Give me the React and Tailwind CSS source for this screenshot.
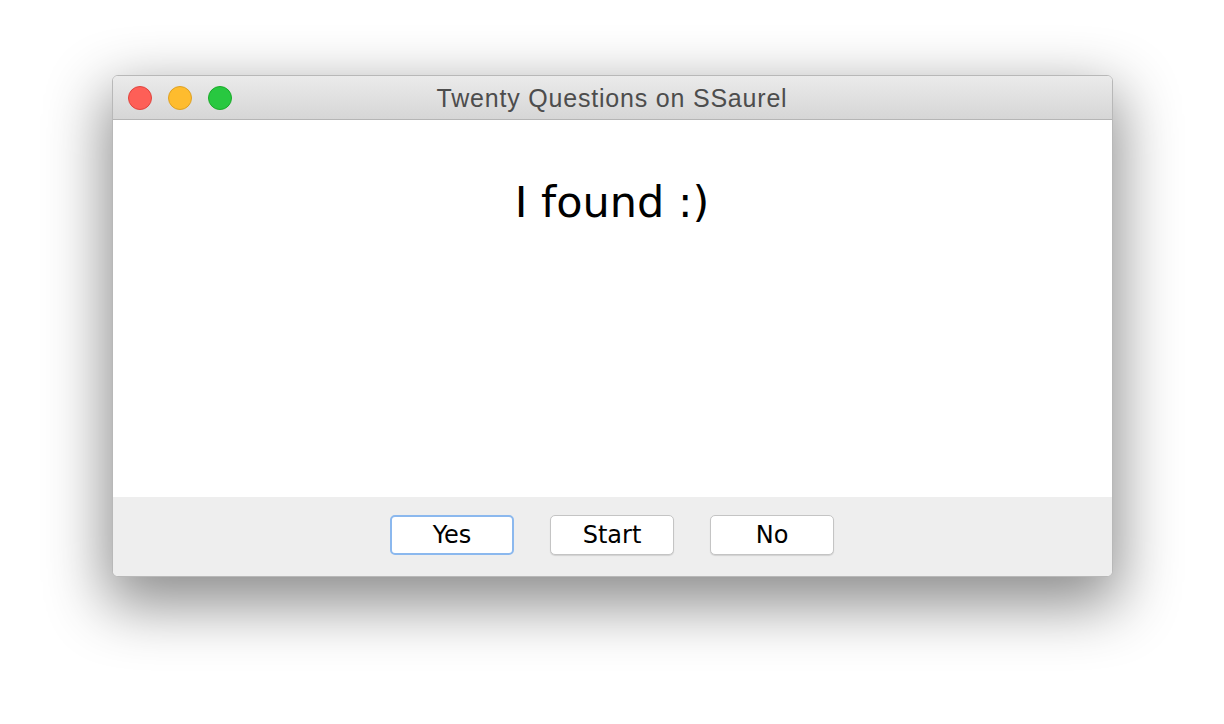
export default function App() {
  return (
    <div className="w-[1224px] h-[724px] bg-white flex flex-col items-center pt-[75px]">
      <div className="w-[1001px] h-[502px] rounded-[6px] bg-white flex flex-col overflow-hidden border border-[#b8b8b8] shadow-[0_22px_60px_6px_rgba(0,0,0,0.45)]">
        <div className="relative h-[44px] shrink-0 flex items-center justify-center bg-gradient-to-b from-[#ebebeb] to-[#d6d6d6] border-b border-[#b5b5b5]">
          <div className="absolute left-[15px] top-[10px] flex gap-[16px]">
            <div className="w-[24px] h-[24px] rounded-full bg-[#fe5f57] border border-[#e0443e]" />
            <div className="w-[24px] h-[24px] rounded-full bg-[#febc2e] border border-[#dea123]" />
            <div className="w-[24px] h-[24px] rounded-full bg-[#28c840] border border-[#1aab29]" />
          </div>
          <span className="text-[25px] tracking-[0.8px] text-[#4d4d4d] leading-none pt-[2px]" style={{ fontFamily: '"Liberation Sans", Arial, sans-serif' }}>
            Twenty Questions on SSaurel
          </span>
        </div>
        <div className="flex-1 bg-white flex justify-center pt-[61px]" style={{ fontFamily: '"DejaVu Sans", sans-serif' }}>
          <span className="text-[43px] leading-none text-black h-fit">I found :)</span>
        </div>
        <div className="h-[79px] shrink-0 bg-[#eeeeee] flex items-start justify-center gap-[36px] pt-[18px]" style={{ fontFamily: '"DejaVu Sans", sans-serif' }}>
          <button className="w-[124px] h-[40px] rounded-[5px] bg-white border-2 border-[#8bb8ee] text-[24px] text-black leading-none">Yes</button>
          <button className="w-[124px] h-[40px] rounded-[5px] bg-white border border-[#c4c4c4] shadow-[0_1px_1px_rgba(0,0,0,0.12)] text-[24px] text-black leading-none">Start</button>
          <button className="w-[124px] h-[40px] rounded-[5px] bg-white border border-[#c4c4c4] shadow-[0_1px_1px_rgba(0,0,0,0.12)] text-[24px] text-black leading-none">No</button>
        </div>
      </div>
    </div>
  );
}
